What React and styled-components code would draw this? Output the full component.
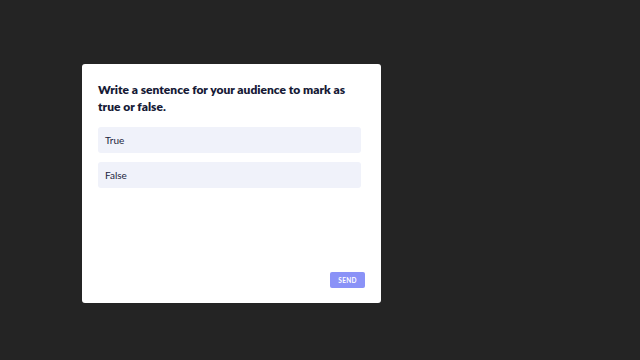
import React from "react";
import styled, { createGlobalStyle } from "styled-components";

const Global = createGlobalStyle`
  html, body { margin: 0; padding: 0; background: #242424; }
  body { font-family: "Lato", "Open Sans", sans-serif; }
  #root { width: 640px; height: 360px; }
`;

const Page = styled.div`
  width: 640px;
  height: 360px;
  box-sizing: border-box;
  padding: 64px 0 0 82px;
  background: #242424;
`;

const Card = styled.div`
  width: 299px;
  height: 239px;
  box-sizing: border-box;
  background: #ffffff;
  border-radius: 3px;
  padding: 17px 20px 15px 16px;
  display: flex;
  flex-direction: column;
`;

const Title = styled.h1`
  margin: 0;
  font-size: 12px;
  line-height: 17px;
  font-weight: 800;
  color: #161a36;
  letter-spacing: 0;
`;

const Options = styled.div`
  display: flex;
  flex-direction: column;
  gap: 9px;
  margin-top: 12px;
`;

const Option = styled.div`
  height: 26px;
  border-radius: 3px;
  background: #f0f2fa;
  display: flex;
  align-items: center;
  padding: 0 7px;
  font-size: 10px;
  color: #222640;
`;

const Footer = styled.div`
  margin-top: auto;
  display: flex;
  justify-content: flex-end;
`;

const SendButton = styled.button`
  width: 35px;
  height: 16px;
  border: none;
  border-radius: 2px;
  background: #8a92f7;
  color: #ffffff;
  font-family: "Lato", sans-serif;
  font-size: 6.5px;
  font-weight: 700;
  letter-spacing: 0.3px;
  padding: 0;
  margin-right: -4px;
`;

export default function App() {
  return (
    <>
      <Global />
      <Page>
        <Card>
          <Title>Write a sentence for your audience to mark as true or false.</Title>
          <Options>
            <Option>True</Option>
            <Option>False</Option>
          </Options>
          <Footer>
            <SendButton>SEND</SendButton>
          </Footer>
        </Card>
      </Page>
    </>
  );
}
